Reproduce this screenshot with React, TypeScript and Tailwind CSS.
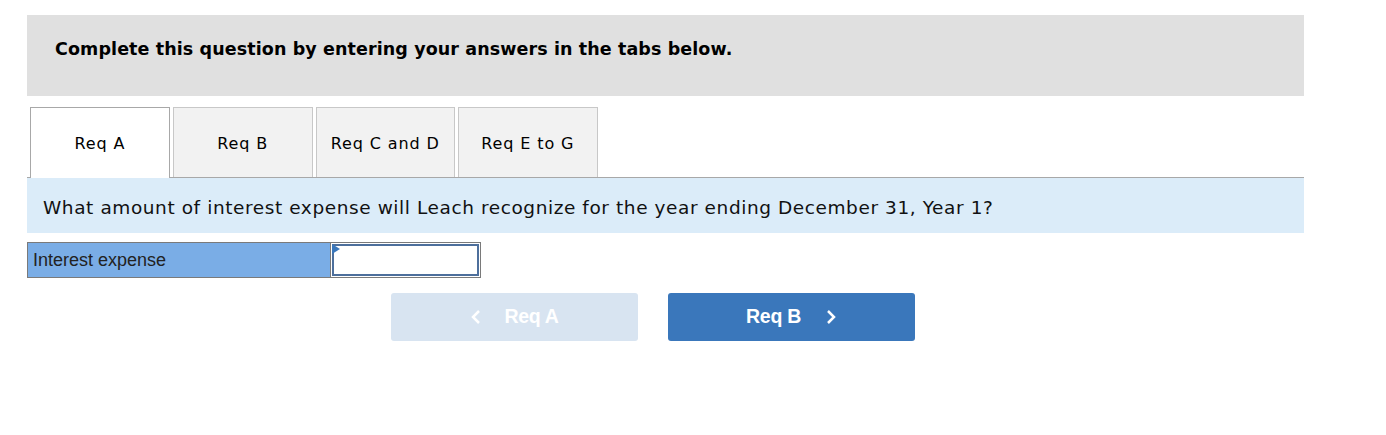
import React from 'react';

const tabs = ['Req A', 'Req B', 'Req C and D', 'Req E to G'];

const ChevronLeft = () => (
  <svg width="12" height="16" viewBox="0 0 12 16" fill="none">
    <path d="M9 2 L3 8 L9 14" stroke="currentColor" strokeWidth="2.5" />
  </svg>
);

const ChevronRight = () => (
  <svg width="12" height="16" viewBox="0 0 12 16" fill="none">
    <path d="M3 2 L9 8 L3 14" stroke="currentColor" strokeWidth="2.5" />
  </svg>
);

const App: React.FC = () => {
  return (
    <div className="w-[1386px] h-[435px] bg-white pt-[15px] pl-[27px] font-['DejaVu_Sans',Verdana,sans-serif] text-black">
      <div className="w-[1277px]">
        {/* Instructions */}
        <div className="h-[81px] bg-[#e0e0e0] pl-[28px] pt-[21px]">
          <p className="text-[17.5px] font-bold tracking-[0.1px]">Complete this question by entering your answers in the tabs below.</p>
        </div>

        {/* Tabs */}
        <div className="mt-[11px] flex items-end border-b border-[#a8a8a8] pl-[3px]">
          {tabs.map((t, i) => (
            <div
              key={t}
              className={
                i === 0
                  ? 'w-[140px] h-[71px] -mb-px mr-[3px] flex items-center justify-center border border-b-0 border-[#a8a8a8] bg-white text-[16px] tracking-[0.9px]'
                  : 'w-[139.5px] h-[70px] mr-[3px] flex items-center justify-center border border-b-0 border-[#c8c8c8] bg-[#f2f2f2] text-[16px] tracking-[0.9px]'
              }
            >
              <span className="mt-[2px]">{t}</span>
            </div>
          ))}
        </div>

        {/* Question */}
        <div className="h-[55px] bg-[#dbecf9] pl-[16px] flex items-center">
          <p className="mt-[4px] text-[18.5px] tracking-[0.58px] text-[#111]">What amount of interest expense will Leach recognize for the year ending December 31, Year 1?</p>
        </div>

        {/* Answer row */}
        <div className="mt-[9px] flex h-[36px]">
          <div className="w-[304px] bg-[#7aade6] border border-[#7a7a7a] pl-[5px] flex items-center font-['Liberation_Sans',Arial,sans-serif] text-[18px] text-[#222]">
            Interest expense
          </div>
          <div className="relative w-[150px] border border-[#7a7a7a] border-l-0 p-px bg-white">
            <div className="h-full border-2 border-[#4d6f9c] bg-white" />
            <svg className="absolute left-[1px] top-[1px]" width="8" height="10" viewBox="0 0 8 10">
              <polygon points="0,0 8,5 0,10" fill="#3a77bb" />
            </svg>
          </div>
        </div>

        {/* Navigation */}
        <div className="mt-[15px] flex pl-[364px] gap-[30px] font-['Liberation_Sans',Arial,sans-serif]">
          <button className="w-[247px] h-[48px] rounded-[3px] bg-[#d8e4f1] text-white font-bold text-[19.5px] tracking-[-0.3px] flex items-center justify-center gap-[22px]">
            <ChevronLeft />
            <span>Req A</span>
          </button>
          <button className="w-[247px] h-[48px] rounded-[3px] bg-[#3a77bb] text-white font-bold text-[19.5px] tracking-[-0.3px] flex items-center justify-center gap-[24px]">
            <span>Req B</span>
            <ChevronRight />
          </button>
        </div>
      </div>
    </div>
  );
};

export default App;
